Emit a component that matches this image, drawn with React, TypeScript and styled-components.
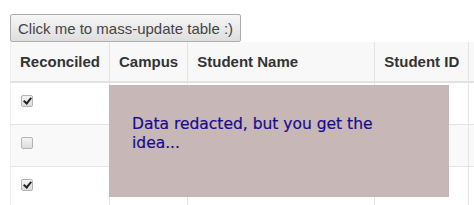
import React from "react";
import styled, { createGlobalStyle } from "styled-components";

const Global = createGlobalStyle`
  html, body {
    margin: 0;
    padding: 0;
    background: #fff;
    overflow: hidden;
  }
  body {
    font-family: "Liberation Sans", Arial, sans-serif;
    color: #333;
  }
`;

const Page = styled.div`
  padding: 14px 0 0 10px;
  width: 464px;
  overflow: hidden;
`;

const MassButton = styled.button`
  display: block;
  height: 28px;
  padding: 0 7px;
  font-family: "Liberation Sans", Arial, sans-serif;
  font-size: 15px;
  color: #444;
  background: linear-gradient(#f6f6f6, #dedede);
  border: 1px solid #adadad;
  border-radius: 2px;
  cursor: pointer;
`;

const TableWrap = styled.div`
  position: relative;
  width: 600px;
`;

const Table = styled.table`
  border-collapse: collapse;
  border-spacing: 0;
  font-size: 15px;
`;

const Th = styled.th<{ w: number }>`
  width: ${({ w }) => w}px;
  box-sizing: border-box;
  height: 40px;
  padding: 0 9px;
  text-align: left;
  font-weight: bold;
  color: #333;
  background: #f8f8f8;
  border-left: 1px solid #e4e4e4;
  border-bottom: 2px solid #e2e2e2;
  &:first-child {
    border-left: 1px solid #f0f0f0;
  }
`;

const Tr = styled.tr<{ striped?: boolean }>`
  background: ${({ striped }) => (striped ? "#f9f9f9" : "#fff")};
`;

const Td = styled.td`
  height: 41px;
  padding: 0 9px;
  border-left: 1px solid #e4e4e4;
  border-bottom: 1px solid #e4e4e4;
  vertical-align: middle;
  &:first-child {
    border-left: 1px solid #f0f0f0;
  }
`;

const Check = styled.input`
  appearance: none;
  -webkit-appearance: none;
  position: relative;
  display: block;
  margin: 0 0 0 1px;
  width: 12px;
  height: 12px;
  box-sizing: border-box;
  border: 1px solid #b4b4b4;
  border-radius: 2px;
  background: linear-gradient(#f4f4f4, #dcdcdc);
  transform: translateY(-3px);
  &:checked::after {
    content: "";
    position: absolute;
    left: 3px;
    top: 0px;
    width: 3px;
    height: 6px;
    border: solid #222;
    border-width: 0 2px 2px 0;
    transform: rotate(40deg);
  }
`;

const Redacted = styled.div`
  position: absolute;
  left: 99px;
  top: 43px;
  width: 340px;
  height: 112px;
  box-sizing: border-box;
  padding: 30px 0 0 23px;
  background: #c8b7b7;
  color: #180c8c;
  font-family: "DejaVu Sans", Verdana, sans-serif;
  font-size: 15.5px;
  line-height: 19px;
  -webkit-text-stroke: 0.2px #180c8c;
`;

const RedactedText = styled.div`
  width: 270px;
`;

const rows = [true, false, true];

export default function App() {
  return (
    <>
      <Global />
      <Page>
        <MassButton>Click me to mass-update table :)</MassButton>
        <TableWrap>
          <Table>
            <thead>
              <tr>
                <Th w={99}>Reconciled</Th>
                <Th w={78}>Campus</Th>
                <Th w={187}>Student Name</Th>
                <Th w={94}>Student ID</Th>
                <Th w={120}></Th>
              </tr>
            </thead>
            <tbody>
              {rows.map((checked, i) => (
                <Tr key={i} striped={i % 2 === 1}>
                  <Td>
                    <Check type="checkbox" defaultChecked={checked} />
                  </Td>
                  <Td />
                  <Td />
                  <Td />
                  <Td />
                </Tr>
              ))}
            </tbody>
          </Table>
          <Redacted>
            <RedactedText>Data redacted, but you get the idea...</RedactedText>
          </Redacted>
        </TableWrap>
      </Page>
    </>
  );
}
